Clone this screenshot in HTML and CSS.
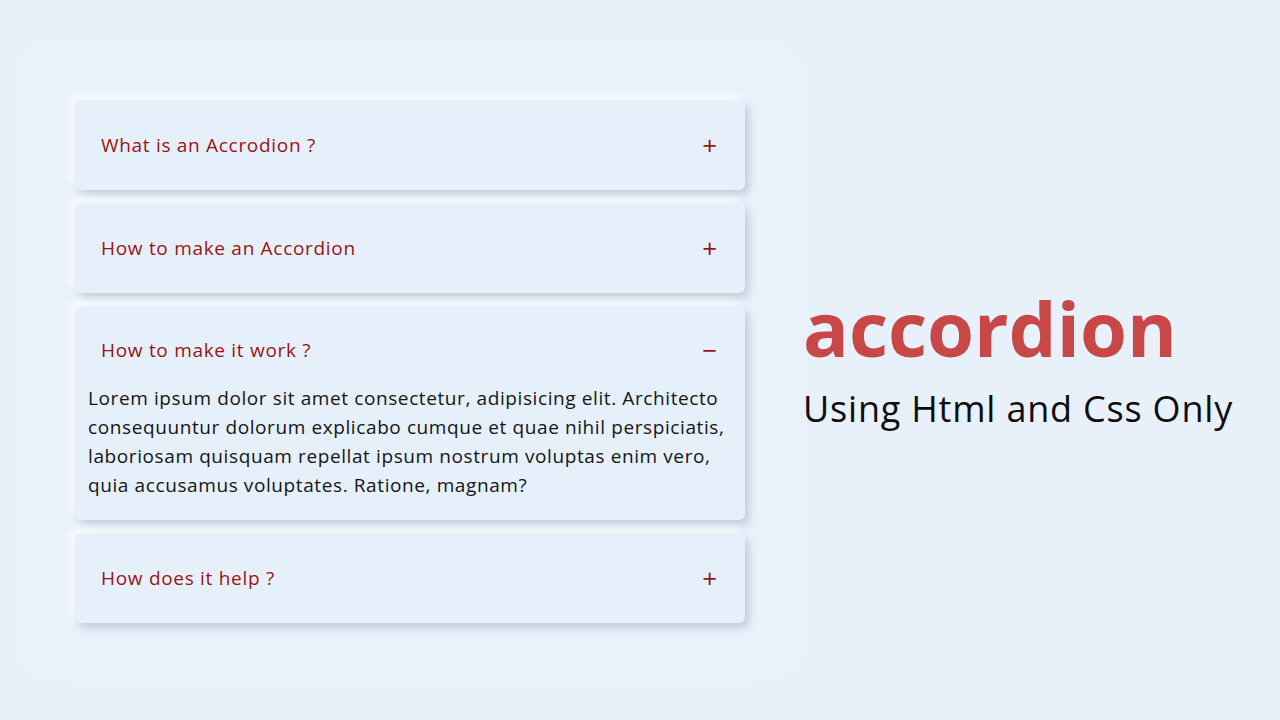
FILE: index.html
```html
<!DOCTYPE html>
<html lang="en">
<head>
  <meta charset="UTF-8">
  <meta name="viewport" content="width=device-width, initial-scale=1.0">
  <title>Accordion</title>
  <link rel="stylesheet" href="styles.css">
</head>
<body>
  <div class="page">
    <div class="wrapper">
      <div class="accordion">
        <div class="item">
          <div class="question">
            <span>What is an Accrodion ?</span>
            <span class="sign">+</span>
          </div>
        </div>
        <div class="item">
          <div class="question">
            <span>How to make an Accordion</span>
            <span class="sign">+</span>
          </div>
        </div>
        <div class="item open">
          <div class="question">
            <span>How to make it work ?</span>
            <span class="sign minus">&minus;</span>
          </div>
          <p class="answer">Lorem ipsum dolor sit amet consectetur, adipisicing elit. Architecto consequuntur dolorum explicabo cumque et quae nihil perspiciatis, laboriosam quisquam repellat ipsum nostrum voluptas enim vero, quia accusamus voluptates. Ratione, magnam?</p>
        </div>
        <div class="item">
          <div class="question">
            <span>How does it help ?</span>
            <span class="sign">+</span>
          </div>
        </div>
      </div>
    </div>

    <div class="title">
      <h1>accordion</h1>
      <h2>Using Html and Css Only</h2>
    </div>
  </div>
</body>
</html>
```

FILE: styles.css
```css
* {
  box-sizing: border-box;
}
body {
  margin: 0;
  font-family: 'Open Sans', 'Liberation Sans', sans-serif;
  background-color: #e8f0fa;
  height: 720px;
  overflow: hidden;
}
.page {
  display: flex;
  align-items: center;
  height: 720px;
  padding-left: 30px;
}
.wrapper {
  padding: 45px;
  border-radius: 12px;
  background: #e9f1fb;
  box-shadow: 0 0 30px rgba(255, 255, 255, 0.35);
}
.accordion {
  width: 670px;
  display: flex;
  flex-direction: column;
  gap: 13px;
  margin-top: 2px;
}
.item {
  background: #e6f0fb;
  border-radius: 6px;
  box-shadow: 4px 5px 8px rgba(90, 110, 140, 0.28), -5px -5px 10px rgba(255, 255, 255, 0.8);
}
.question {
  display: flex;
  justify-content: space-between;
  align-items: center;
  height: 90px;
  padding: 0 28px 0 26px;
  color: #9b1414;
  font-size: 19px;
  letter-spacing: 0.7px;
}
.sign {
  font-size: 26px;
  font-weight: 400;
  line-height: 1;
  letter-spacing: 0;
}
.open .question {
  height: 88px;
}
.answer {
  margin: -10px 0 0;
  padding: 0 13px 20px;
  font-size: 19px;
  letter-spacing: 0.6px;
  line-height: 29px;
  color: #151515;
}
.title {
  margin-left: 13px;
  margin-top: 2px;
}
.title h1 {
  margin: 0;
  font-size: 76px;
  font-weight: 700;
  line-height: 1;
  color: #c84848;
}
.title h2 {
  margin: 18px 0 0;
  font-size: 36px;
  font-weight: 500;
  letter-spacing: 0.8px;
  color: #0d0d0d;
}
```
